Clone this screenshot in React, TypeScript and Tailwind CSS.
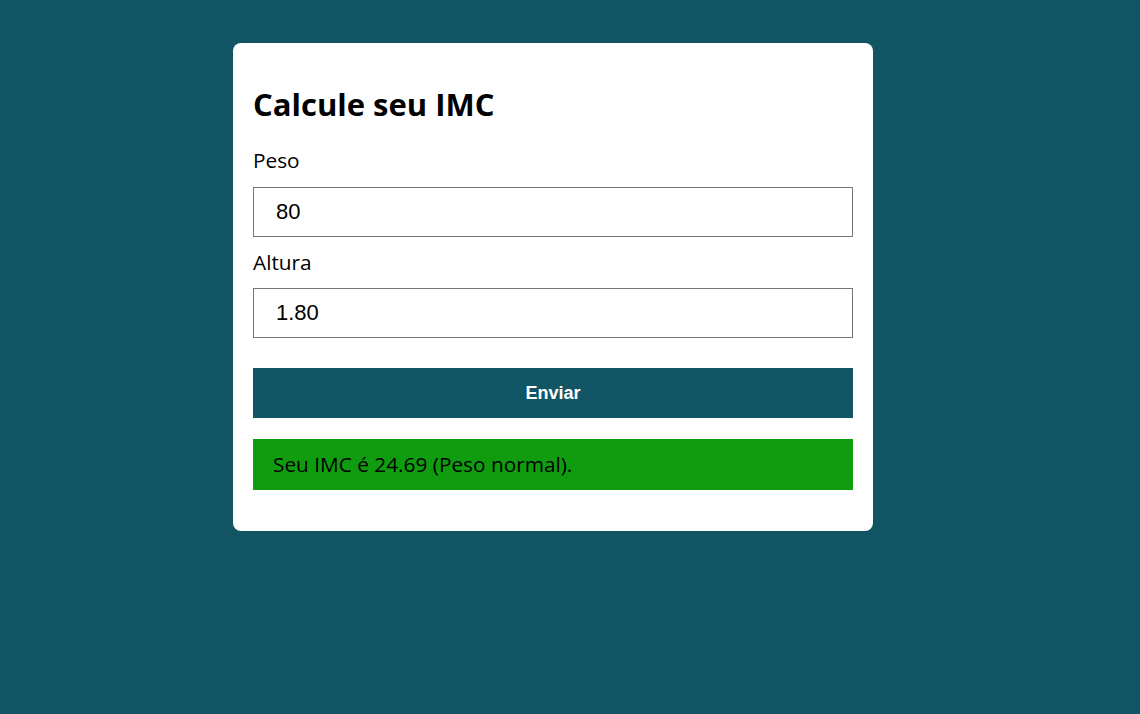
import { useState } from 'react'

function classify(imc: number) {
  if (imc < 18.5) return 'Abaixo do peso'
  if (imc < 25) return 'Peso normal'
  if (imc < 30) return 'Sobrepeso'
  return 'Obesidade'
}

export default function App() {
  const [peso, setPeso] = useState('80')
  const [altura, setAltura] = useState('1.80')
  const [result, setResult] = useState('Seu IMC é 24.69 (Peso normal).')

  const submit = (e: React.FormEvent) => {
    e.preventDefault()
    const p = parseFloat(peso)
    const a = parseFloat(altura)
    if (!p || !a) return
    const imc = p / (a * a)
    setResult(`Seu IMC é ${imc.toFixed(2)} (${classify(imc)}).`)
  }

  return (
    <div className="min-h-screen bg-[#115565] pt-[43px] font-['Open_Sans',sans-serif]">
      <form
        onSubmit={submit}
        className="ml-[233px] w-[640px] rounded-lg bg-white px-5 pt-[39px] pb-[41px]"
      >
        <h1 className="text-[31px] font-bold leading-[44px] text-black">Calcule seu IMC</h1>

        <label className="mt-[21px] block text-[20.8px] leading-[27px] text-black">Peso</label>
        <input
          value={peso}
          onChange={(e) => setPeso(e.target.value)}
          className="mt-[13px] block h-[50px] w-full border border-[#767676] px-[22px] font-['Liberation_Sans',Arial,sans-serif] text-[22px] text-black outline-none"
        />

        <label className="mt-[12px] block text-[20.8px] leading-[27px] text-black">Altura</label>
        <input
          value={altura}
          onChange={(e) => setAltura(e.target.value)}
          className="mt-[12px] block h-[50px] w-full border border-[#767676] px-[22px] font-['Liberation_Sans',Arial,sans-serif] text-[22px] text-black outline-none"
        />

        <button
          type="submit"
          className="mt-[30px] block h-[50px] w-full bg-[#125565] font-['Liberation_Sans',Arial,sans-serif] text-[18px] font-bold text-white"
        >
          Enviar
        </button>

        <div className="mt-[21px] flex h-[51px] items-center bg-[#0f9d0f] px-5 text-[20.8px] text-black">
          {result}
        </div>
      </form>
    </div>
  )
}
